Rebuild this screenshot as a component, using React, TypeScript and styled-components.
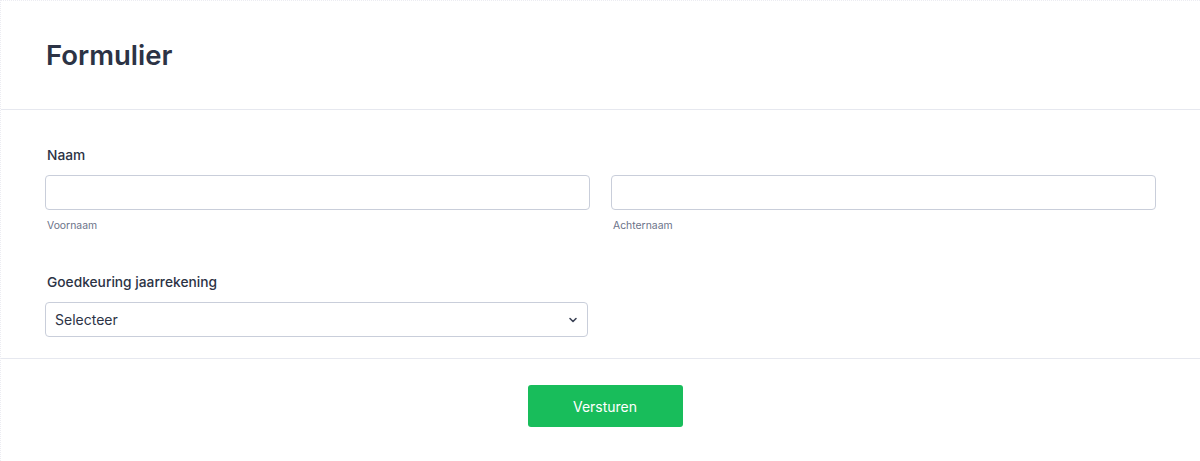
import React from "react";
import styled, { createGlobalStyle } from "styled-components";

const Global = createGlobalStyle`
  html, body { margin: 0; padding: 0; background: #fff; }
  body { font-family: Inter, "Noto Sans", sans-serif; color: #2c3345; }
  * { box-sizing: border-box; }
`;

const Page = styled.div`
  width: 1200px;
  height: 461px;
  display: flex;
  flex-direction: column;
  border-top: 1px dotted #ececf2;
  border-left: 1px dotted #ececf2;
  overflow: hidden;
`;

const Header = styled.header`
  height: 109px;
  display: flex;
  align-items: center;
  padding: 0 45px;
  border-bottom: 1px solid #e6e8ef;
`;

const Title = styled.h1`
  margin: 0;
  font-size: 27.5px;
  font-weight: 600;
  color: #2c3345;
  line-height: 1.2;
`;

const Body = styled.section`
  padding: 35px 44px 21px 44px;
  display: flex;
  flex-direction: column;
  border-bottom: 1px solid #e6e8ef;
`;

const Field = styled.div<{ $gapAfter?: number }>`
  display: flex;
  flex-direction: column;
  margin-bottom: ${(p) => p.$gapAfter ?? 0}px;
`;

const Label = styled.label`
  font-size: 13.75px;
  font-weight: 500;
  line-height: 20px;
  color: #2c3345;
  padding-left: 2px;
  margin-bottom: 10px;
`;

const Row = styled.div`
  display: grid;
  grid-template-columns: 545px 545px;
  column-gap: 21px;
`;

const Col = styled.div`
  display: flex;
  flex-direction: column;
`;

const Input = styled.div`
  height: 35px;
  border: 1px solid #c9ceda;
  border-radius: 4px;
  background: #fff;
`;

const SubLabel = styled.span`
  font-size: 10.4px;
  line-height: 14px;
  color: #6b7389;
  margin-top: 9px;
  padding-left: 2px;
`;

const Select = styled.div`
  width: 543px;
  height: 35px;
  border: 1px solid #c9ceda;
  border-radius: 4px;
  display: flex;
  align-items: center;
  justify-content: space-between;
  padding: 0 9px 0 9px;
  font-size: 14px;
  color: #2c3345;
`;

const Footer = styled.footer`
  display: flex;
  justify-content: center;
  padding-top: 26px;
  padding-left: 9px;
`;

const Button = styled.button`
  width: 155px;
  height: 42px;
  border: none;
  border-radius: 3px;
  background: #18bd5b;
  color: #fff;
  font-family: Inter, "Noto Sans", sans-serif;
  font-size: 14px;
  font-weight: 400;
`;

export default function App() {
  return (
    <>
      <Global />
      <Page>
        <Header>
          <Title>Formulier</Title>
        </Header>
        <Body>
          <Field $gapAfter={39}>
            <Label>Naam</Label>
            <Row>
              <Col>
                <Input />
                <SubLabel>Voornaam</SubLabel>
              </Col>
              <Col>
                <Input />
                <SubLabel>Achternaam</SubLabel>
              </Col>
            </Row>
          </Field>
          <Field>
            <Label>Goedkeuring jaarrekening</Label>
            <Select>
              <span>Selecteer</span>
              <svg width="10" height="10" viewBox="0 0 10 10" fill="none">
                <path d="M2 3.5 L5 6.5 L8 3.5" stroke="#3d4457" strokeWidth="1.6" strokeLinecap="round" strokeLinejoin="round" />
              </svg>
            </Select>
          </Field>
        </Body>
        <Footer>
          <Button>Versturen</Button>
        </Footer>
      </Page>
    </>
  );
}
